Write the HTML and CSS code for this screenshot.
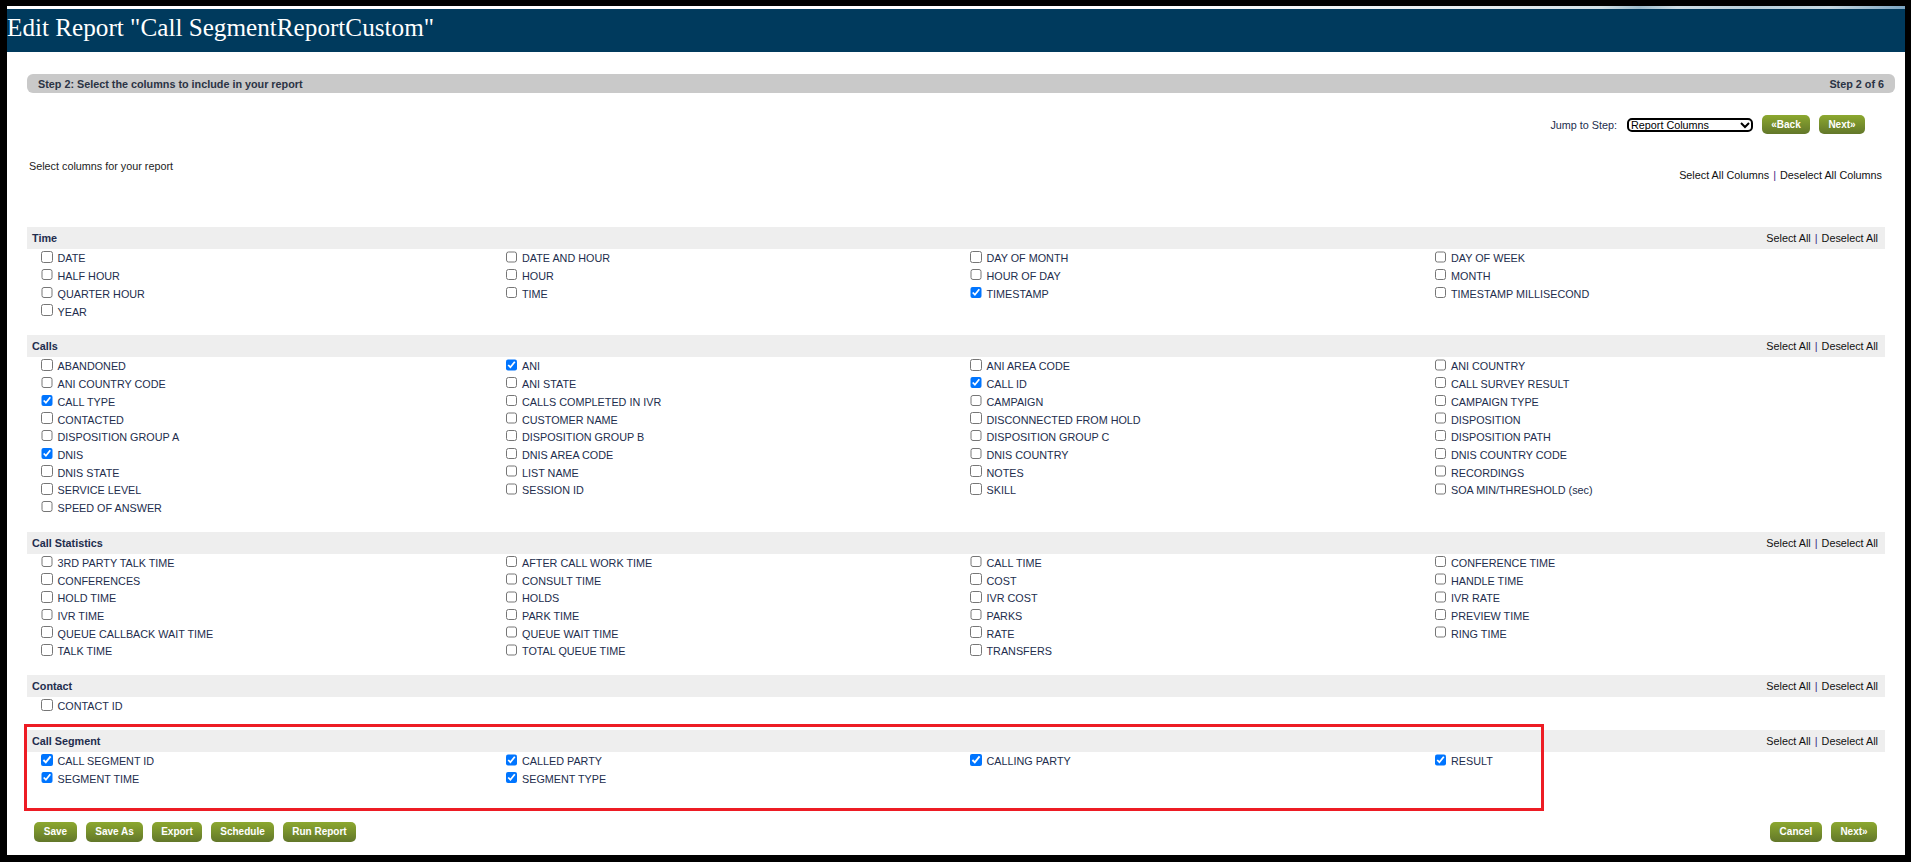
FILE: index.html
```html
<!DOCTYPE html>
<html lang="en">
<head>
<meta charset="utf-8">
<title>Edit Report</title>
<link rel="stylesheet" href="styles.css">
</head>
<body>
<div class="window">
  <div class="strip"></div>
  <h1 class="title">Edit Report "Call SegmentReportCustom"</h1>
  <div class="stepbar"><span>Step 2: Select the columns to include in your report</span><span>Step 2 of 6</span></div>
  <div class="toolbar">
    <label class="jump-label" for="jump">Jump to Step:</label>
    <select id="jump" class="jump"><option>Report Columns</option></select>
    <a class="btn btn-back">«Back</a>
    <a class="btn btn-next">Next»</a>
  </div>
  <div class="intro">
    <span class="intro-text">Select columns for your report</span>
    <span class="intro-links">Select All Columns <i>|</i> Deselect All Columns</span>
  </div>

  <section class="group">
    <div class="head"><b>Time</b><span class="links">Select All <i>|</i> Deselect All</span></div>
    <div class="cols">
      <label class="item"><input type="checkbox">DATE</label>
      <label class="item"><input type="checkbox">DATE AND HOUR</label>
      <label class="item"><input type="checkbox">DAY OF MONTH</label>
      <label class="item"><input type="checkbox">DAY OF WEEK</label>
      <label class="item"><input type="checkbox">HALF HOUR</label>
      <label class="item"><input type="checkbox">HOUR</label>
      <label class="item"><input type="checkbox">HOUR OF DAY</label>
      <label class="item"><input type="checkbox">MONTH</label>
      <label class="item"><input type="checkbox">QUARTER HOUR</label>
      <label class="item"><input type="checkbox">TIME</label>
      <label class="item"><input type="checkbox" checked>TIMESTAMP</label>
      <label class="item"><input type="checkbox">TIMESTAMP MILLISECOND</label>
      <label class="item"><input type="checkbox">YEAR</label>
    </div>
  </section>

  <section class="group">
    <div class="head"><b>Calls</b><span class="links">Select All <i>|</i> Deselect All</span></div>
    <div class="cols">
      <label class="item"><input type="checkbox">ABANDONED</label>
      <label class="item"><input type="checkbox" checked>ANI</label>
      <label class="item"><input type="checkbox">ANI AREA CODE</label>
      <label class="item"><input type="checkbox">ANI COUNTRY</label>
      <label class="item"><input type="checkbox">ANI COUNTRY CODE</label>
      <label class="item"><input type="checkbox">ANI STATE</label>
      <label class="item"><input type="checkbox" checked>CALL ID</label>
      <label class="item"><input type="checkbox">CALL SURVEY RESULT</label>
      <label class="item"><input type="checkbox" checked>CALL TYPE</label>
      <label class="item"><input type="checkbox">CALLS COMPLETED IN IVR</label>
      <label class="item"><input type="checkbox">CAMPAIGN</label>
      <label class="item"><input type="checkbox">CAMPAIGN TYPE</label>
      <label class="item"><input type="checkbox">CONTACTED</label>
      <label class="item"><input type="checkbox">CUSTOMER NAME</label>
      <label class="item"><input type="checkbox">DISCONNECTED FROM HOLD</label>
      <label class="item"><input type="checkbox">DISPOSITION</label>
      <label class="item"><input type="checkbox">DISPOSITION GROUP A</label>
      <label class="item"><input type="checkbox">DISPOSITION GROUP B</label>
      <label class="item"><input type="checkbox">DISPOSITION GROUP C</label>
      <label class="item"><input type="checkbox">DISPOSITION PATH</label>
      <label class="item"><input type="checkbox" checked>DNIS</label>
      <label class="item"><input type="checkbox">DNIS AREA CODE</label>
      <label class="item"><input type="checkbox">DNIS COUNTRY</label>
      <label class="item"><input type="checkbox">DNIS COUNTRY CODE</label>
      <label class="item"><input type="checkbox">DNIS STATE</label>
      <label class="item"><input type="checkbox">LIST NAME</label>
      <label class="item"><input type="checkbox">NOTES</label>
      <label class="item"><input type="checkbox">RECORDINGS</label>
      <label class="item"><input type="checkbox">SERVICE LEVEL</label>
      <label class="item"><input type="checkbox">SESSION ID</label>
      <label class="item"><input type="checkbox">SKILL</label>
      <label class="item"><input type="checkbox">SOA MIN/THRESHOLD (sec)</label>
      <label class="item"><input type="checkbox">SPEED OF ANSWER</label>
    </div>
  </section>

  <section class="group">
    <div class="head"><b>Call Statistics</b><span class="links">Select All <i>|</i> Deselect All</span></div>
    <div class="cols">
      <label class="item"><input type="checkbox">3RD PARTY TALK TIME</label>
      <label class="item"><input type="checkbox">AFTER CALL WORK TIME</label>
      <label class="item"><input type="checkbox">CALL TIME</label>
      <label class="item"><input type="checkbox">CONFERENCE TIME</label>
      <label class="item"><input type="checkbox">CONFERENCES</label>
      <label class="item"><input type="checkbox">CONSULT TIME</label>
      <label class="item"><input type="checkbox">COST</label>
      <label class="item"><input type="checkbox">HANDLE TIME</label>
      <label class="item"><input type="checkbox">HOLD TIME</label>
      <label class="item"><input type="checkbox">HOLDS</label>
      <label class="item"><input type="checkbox">IVR COST</label>
      <label class="item"><input type="checkbox">IVR RATE</label>
      <label class="item"><input type="checkbox">IVR TIME</label>
      <label class="item"><input type="checkbox">PARK TIME</label>
      <label class="item"><input type="checkbox">PARKS</label>
      <label class="item"><input type="checkbox">PREVIEW TIME</label>
      <label class="item"><input type="checkbox">QUEUE CALLBACK WAIT TIME</label>
      <label class="item"><input type="checkbox">QUEUE WAIT TIME</label>
      <label class="item"><input type="checkbox">RATE</label>
      <label class="item"><input type="checkbox">RING TIME</label>
      <label class="item"><input type="checkbox">TALK TIME</label>
      <label class="item"><input type="checkbox">TOTAL QUEUE TIME</label>
      <label class="item"><input type="checkbox">TRANSFERS</label>
    </div>
  </section>

  <section class="group">
    <div class="head"><b>Contact</b><span class="links">Select All <i>|</i> Deselect All</span></div>
    <div class="cols">
      <label class="item"><input type="checkbox">CONTACT ID</label>
    </div>
  </section>

  <section class="group group-marked">
    <div class="marker"></div>
    <div class="head"><b>Call Segment</b><span class="links">Select All <i>|</i> Deselect All</span></div>
    <div class="cols">
      <label class="item"><input type="checkbox" checked>CALL SEGMENT ID</label>
      <label class="item"><input type="checkbox" checked>CALLED PARTY</label>
      <label class="item"><input type="checkbox" checked>CALLING PARTY</label>
      <label class="item"><input type="checkbox" checked>RESULT</label>
      <label class="item"><input type="checkbox" checked>SEGMENT TIME</label>
      <label class="item"><input type="checkbox" checked>SEGMENT TYPE</label>
    </div>
  </section>

  <div class="footer">
    <div class="btns">
      <a class="btn btn-save">Save</a>
      <a class="btn btn-saveas">Save As</a>
      <a class="btn btn-export">Export</a>
      <a class="btn btn-schedule">Schedule</a>
      <a class="btn btn-run">Run Report</a>
    </div>
    <div class="btns">
      <a class="btn btn-cancel">Cancel</a>
      <a class="btn btn-next">Next»</a>
    </div>
  </div>
</div>
</body>
</html>
```
FILE: styles.css
```css
* { box-sizing: border-box; }
html, body { margin: 0; height: 100%; background: #000; overflow: hidden; }
body { padding: 6px 6px 7px 7px; font-family: "Liberation Sans", Arial, sans-serif; font-size: 10.8px; color: #222d4d; }
.window { width: 1898px; height: 849px; background: #fff; }
.strip { height: 3px; background: linear-gradient(to right, #fff 0, #fff 60%, #e6ecef 78%, #d3e0e6 84%, #9fbccc 86%, #cfdde4 88%, #b9cfda 92%, #c6d7e0 96%, #7ba4c2 100%); }
.title { margin: 0; height: 43px; background: #003a5d; color: #fff; font: normal 25.2px/38px "Liberation Serif", "Times New Roman", serif; }
.stepbar { display: flex; justify-content: space-between; align-items: center; height: 19px; margin: 22px 10px 0 20px; padding: 0 11px; background: #c9c9c9; border-radius: 6px; font-weight: bold; color: #2b3344; }
.toolbar { display: flex; justify-content: flex-end; align-items: center; height: 19px; margin-top: 22px; padding-right: 40px; }
.jump-label { margin-right: 10px; }
.jump { width: 126px; height: 14px; margin-right: 9px; padding: 0; border: 0; outline: 2px solid #000; outline-offset: -2px; border-radius: 5px; background: #fff; font: 10.8px "Liberation Sans", Arial, sans-serif; color: #000; }
.btn { display: inline-flex; align-items: center; justify-content: center; height: 19px; border-radius: 5px; background: linear-gradient(#8ca82f, #62772a); color: #fff; font-weight: bold; font-size: 10px; }
.btn-back { width: 48px; margin-right: 9px; }
.btn-next { width: 46px; }
.intro { display: flex; justify-content: space-between; height: 93px; padding: 26px 23px 0 22px; color: #1c1c1c; }
.intro-links { padding-top: 9px; color: #111; }
.intro-links i, .links i { font-style: normal; color: #3a2a80; padding: 0 1px; }
.group { margin: 0 20px 14.7px 20px; width: 1858px; }
.group-marked { position: relative; }
.head { display: flex; justify-content: space-between; align-items: center; height: 22px; padding: 0 7px 0 5px; background: #eee; }
.links { color: #111; }
.cols { display: grid; grid-template-columns: repeat(4, 1fr); grid-auto-rows: 17.7px; padding-top: 0.6px; }
.item { display: flex; align-items: center; padding-left: 14px; white-space: nowrap; }
.item input { width: 11.5px; height: 11.5px; margin: -3px 5px 0 0; flex: none; }
.marker { position: absolute; left: -3px; top: -6px; width: 1520px; height: 87px; border: 3px solid #ed1c24; pointer-events: none; }
.footer { display: flex; justify-content: space-between; margin-top: 34px; padding: 0 28px 0 27px; }
.btns { display: flex; gap: 9px; }
.footer .btn { height: 20px; }
.btn-save { width: 43px; }
.btn-saveas { width: 57px; }
.btn-export { width: 50px; }
.btn-schedule { width: 63px; }
.btn-run { width: 73px; }
.btn-cancel { width: 52px; }
```
